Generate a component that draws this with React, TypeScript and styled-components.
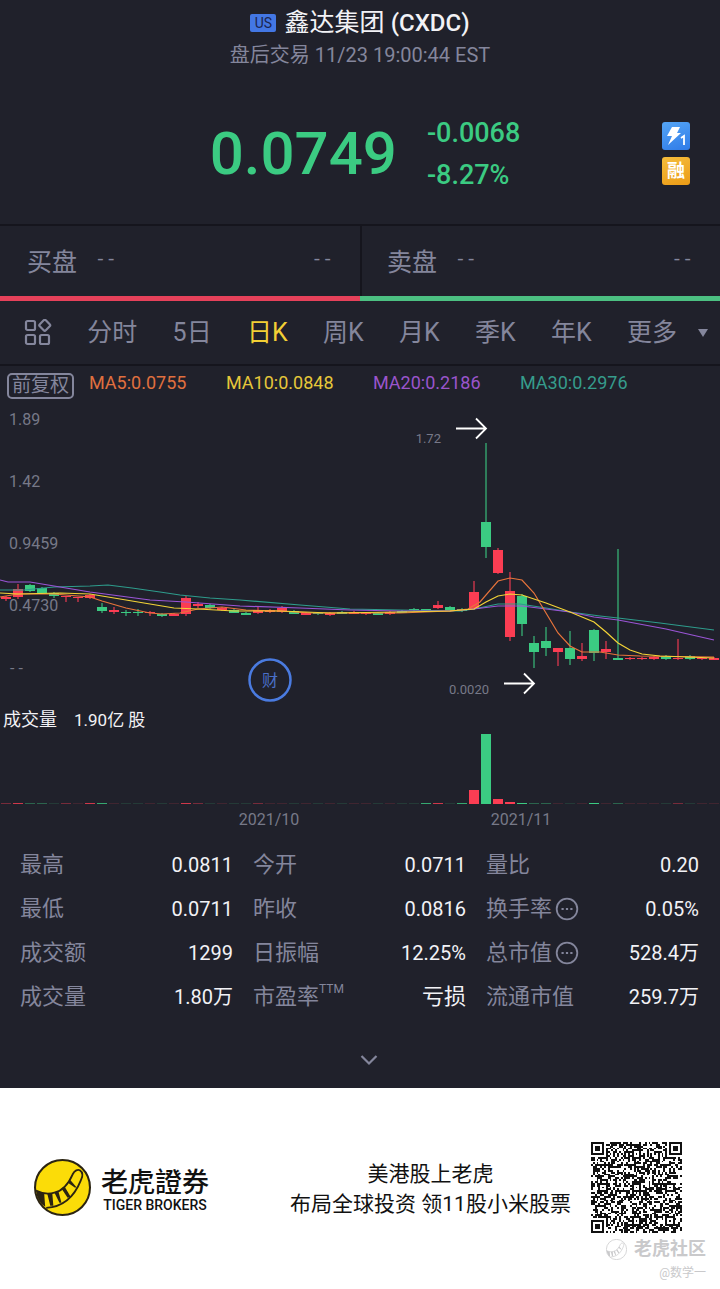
import React from 'react';
import styled, { createGlobalStyle } from 'styled-components';

const latin = `Roboto, "Noto Sans CJK SC", sans-serif`;
const color = {
  bg: '#20212b',
  line: '#15151d',
  muted: '#84869c',
  text: '#f2f2f6',
  red: '#fb3d53',
  green: '#3bcb82',
  yellow: '#f2cf35',
  blue: '#4377e4',
};

const Global = createGlobalStyle`
  * { box-sizing: border-box; }
  body { margin: 0; background: #fff; font-family: ${latin}; color: ${color.text}; }
  button { font: inherit; color: inherit; background: none; border: 0; padding: 0; cursor: pointer; }
`;

const Page = styled.main`
  display: flex;
  flex-direction: column;
`;
const Quote = styled.div`
  background: ${color.bg};
`;
const Header = styled.header`
  display: flex;
  flex-direction: column;
  align-items: center;
  padding-top: 5px;
`;
const Title = styled.h1`
  display: flex;
  align-items: center;
  gap: 8px;
  margin: 0;
  font-size: 25px;
  line-height: 36px;
  font-weight: 400;
`;
const Market = styled.span`
  background: ${color.blue};
  color: #1b2550;
  width: 26px;
  border-radius: 2px;
  font-size: 14px;
  line-height: 18px;
  text-align: center;
`;
const Ticker = styled.span`
  font-size: 24px;
  font-weight: 500;
`;
const Session = styled.p`
  margin: 0;
  color: ${color.muted};
  font-size: 20px;
  line-height: 28px;
`;
const PriceRow = styled.section`
  display: grid;
  grid-template-columns: 1fr auto 1fr;
  align-items: center;
  height: 155px;
  padding: 14px 30px 0 40px;
  color: ${color.green};
`;
const Figures = styled.div`
  grid-column: 2;
  display: flex;
  align-items: center;
  gap: 30px;
`;
const Price = styled.strong`
  font-size: 60px;
  line-height: 72px;
  font-weight: 500;
`;
const Changes = styled.div`
  display: flex;
  flex-direction: column;
  font-size: 27px;
  line-height: 42px;
  font-weight: 500;
`;
const Badges = styled.div`
  display: flex;
  flex-direction: column;
  align-items: flex-end;
  gap: 7px;
`;
const Badge = styled.span<{ $tone: string }>`
  display: grid;
  place-items: center;
  width: 28px;
  height: 28px;
  border-radius: 3px;
  background: ${(p) => p.$tone};
  color: #fff;
  font-size: 18px;
  line-height: 28px;
  font-weight: 700;
`;
const Book = styled.section`
  display: grid;
  grid-template-columns: 1fr 1fr;
  border-top: 2px solid ${color.line};
`;
const Side = styled.div<{ $bar: string }>`
  display: flex;
  align-items: center;
  gap: 18px;
  height: 75px;
  padding: 0 27px 3px;
  border-bottom: 5px solid ${(p) => p.$bar};
  color: ${color.muted};
  font-size: 25px;
  & + & { box-shadow: inset 2px 0 ${color.line}; }
`;
const Dashes = styled.span<{ $end?: boolean }>`
  font-family: "Liberation Mono", monospace;
  font-size: 18px;
  margin-left: ${(p) => (p.$end ? 'auto' : '0')};
`;
const Tabs = styled.nav`
  display: flex;
  align-items: center;
  justify-content: space-between;
  height: 65px;
  padding: 0 11px 0 24px;
  border-bottom: 2px solid ${color.line};
  color: ${color.muted};
`;
const Tab = styled.button<{ $active?: boolean }>`
  display: flex;
  align-items: center;
  gap: 20px;
  font-size: 25px;
  line-height: 36px;
  ${(p) => p.$active && `color: ${color.yellow};`}
`;
const Averages = styled.div`
  display: flex;
  align-items: center;
  height: 34px;
  padding-left: 7px;
  font-size: 18px;
  line-height: 24px;
`;
const Adjust = styled.button`
  width: 67px;
  height: 26px;
  border: 2px solid ${color.muted};
  border-radius: 5px;
  color: ${color.muted};
  font-size: 19px;
  line-height: 22px;
  margin: 6px 15px 0 0;
`;
const Average = styled.span<{ $tone: string; $wide?: boolean }>`
  width: ${(p) => (p.$wide ? 147 : 137)}px;
  color: ${(p) => p.$tone};
`;
const Chart = styled.svg`
  display: block;
  width: 100%;
  height: auto;
  font-family: ${latin};
`;
const VolumeTitle = styled.div`
  display: flex;
  gap: 17px;
  padding: 0 3px;
  font-size: 18px;
  line-height: 24px;
`;
const VolumeValue = styled.span`
  font-size: 17px;
`;
const Stats = styled.dl`
  display: grid;
  grid-template-columns: 1fr 1fr 1fr;
  column-gap: 20px;
  margin: 0;
  padding: 13px 21px 0 20px;
`;
const Stat = styled.div`
  display: flex;
  justify-content: space-between;
  height: 44px;
  font-size: 22px;
  line-height: 40px;
  white-space: nowrap;
`;
const Term = styled.dt`
  display: flex;
  align-items: center;
  gap: 3px;
  color: ${color.muted};
`;
const Sup = styled.sup`
  align-self: flex-start;
  font-size: 12px;
  line-height: 28px;
  margin-left: -3px;
`;
const Value = styled.dd<{ $words?: boolean }>`
  margin: 0;
  font-size: ${(p) => (p.$words ? 22 : 20)}px;
  line-height: 44px;
`;
const Expand = styled.button`
  display: grid;
  place-items: center;
  width: 100%;
  height: 69px;
  padding: 12px 0 0 17px;
  color: ${color.muted};
`;
const Footer = styled.footer`
  display: flex;
  align-items: flex-start;
  justify-content: space-between;
  padding: 54px 14px 8px 34px;
  color: #111;
`;
const Brand = styled.div`
  display: flex;
  align-items: center;
  gap: 10px;
  padding-top: 17px;
`;
const BrandText = styled.div`
  display: flex;
  flex-direction: column;
  align-items: center;
`;
const BrandName = styled.span`
  font-family: "Noto Sans CJK TC", sans-serif;
  font-size: 27px;
  line-height: 34px;
  font-weight: 500;
`;
const BrandLatin = styled.span`
  font-size: 14px;
  line-height: 14px;
  font-weight: 500;
`;
const Slogan = styled.p`
  margin: 0;
  padding: 17px 0 0 61px;
  font-size: 21px;
  line-height: 30px;
  text-align: center;
`;
const Share = styled.div`
  display: flex;
  flex-direction: column;
  align-items: flex-end;
  color: #c9c9cb;
`;
const Code = styled.svg`
  width: 91px;
  height: 91px;
  margin-right: 24px;
`;
const Community = styled.div`
  display: flex;
  align-items: center;
  gap: 7px;
  font-size: 18px;
  line-height: 32px;
  font-weight: 700;
`;
const Author = styled.span`
  font-size: 12px;
  line-height: 16px;
`;

type Candle = [up: 0 | 1, top: number, bottom: number, high: number, low: number];
// One entry per trading day: 1 is drawn green, 0 red.
const candles: Candle[] = [
  [0, 597, 599, 596, 601], [0, 589, 597, 584, 599], [1, 585, 591, 584, 592], [1, 588, 593, 587, 594],
  [1, 593, 596, 592, 598], [0, 596, 597, 596, 602], [0, 597, 598, 597, 602], [0, 595, 598, 594, 599],
  [1, 607, 611, 603, 613], [0, 610, 612, 607, 614], [1, 612, 613, 610, 616], [1, 612, 613, 609, 616],
  [0, 612, 613, 611, 616], [1, 614, 616, 613, 617], [0, 614, 616, 613, 616], [0, 598, 614, 596, 616],
  [0, 604, 606, 602, 608], [1, 605, 608, 604, 609], [0, 608, 610, 607, 611], [1, 610, 613, 609, 613],
  [1, 613, 615, 612, 615], [0, 610, 613, 607, 614], [0, 610, 612, 609, 613], [0, 608, 612, 606, 613],
  [1, 611, 614, 610, 614], [0, 613, 615, 612, 615], [1, 613, 614, 612, 615], [0, 613, 615, 612, 616],
  [1, 612, 614, 611, 614], [0, 612, 614, 611, 614], [0, 613, 614, 612, 615], [1, 613, 615, 612, 615],
  [0, 612, 614, 611, 615], [1, 611, 613, 610, 613], [1, 609, 610, 608, 611], [1, 609, 611, 609, 611],
  [0, 605, 608, 601, 609], [1, 607, 611, 606, 612], [1, 609, 611, 608, 612], [0, 592, 609, 581, 610],
  [1, 522, 547, 443, 558], [0, 550, 573, 548, 574], [0, 591, 637, 572, 641], [1, 596, 624, 594, 636],
  [1, 643, 652, 636, 668], [1, 641, 648, 627, 656], [0, 648, 652, 648, 666], [1, 648, 659, 631, 665],
  [0, 656, 659, 643, 661], [1, 630, 653, 629, 661], [0, 649, 652, 641, 659], [1, 658, 660, 549, 660],
  [0, 658, 659, 657, 660], [0, 658, 659, 657, 660], [0, 657, 659, 656, 660], [1, 656, 659, 655, 660],
  [0, 658, 659, 639, 660], [1, 656, 659, 655, 660], [0, 658, 659, 657, 660], [0, 658, 660, 657, 660],
];
const lines: [string, string][] = [
  ['#2e9c8c', '0,590 24,590 54,587 90,586 108,585 132,588 160,592 180,595 210,598 240,600 300,605 350,609 400,610 460,611 474,609 498,604 520,604 546,608 570,612 600,616 618,618 660,623 714,630'],
  ['#9a55d6', '0,580 8,582 30,582 48,585 66,588 90,592 120,596 150,600 186,602 240,606 300,608 350,610 400,611 450,611 474,609 498,606 522,606 546,609 570,612 594,617 618,620 666,629 714,640'],
  ['#e8743b', '0,597 18,594 54,594 90,597 102,601 126,608 150,613 162,614 180,613 198,609 222,607 246,610 280,611 310,613 400,613 450,611 468,609 480,602 498,581 510,578 522,580 534,593 546,613 558,633 570,646 582,652 600,652 618,655 640,656 714,657'],
  ['#f4d437', '0,593 18,594 60,593 90,594 126,600 150,604 174,608 198,609 234,611 280,611 330,613 400,612 450,611 474,609 486,602 498,596 510,594 522,595 546,603 570,612 594,622 606,632 618,643 630,650 642,654 660,656 714,658'],
];
const scale: [string, number][] = [['1.89', 425], ['1.42', 487], ['0.9459', 549], ['0.4730', 611]];
const volumes: Record<number, number> = { 39: 14, 40: 70, 41: 5, 42: 2, 43: 1, 49: 1 };
const bright = [1, 7, 8, 15, 35, 36, 38];
const faint = [0, 2, 3, 5, 16, 21, 44, 45, 51, 56];

const tone = (up: number) => (up ? color.green : color.red);
const volumeOpacity = (i: number) => {
  if (volumes[i]) return 1;
  if (bright.includes(i)) return 0.8;
  return faint.includes(i) ? 0.4 : 0.15;
};

function PriceChart() {
  return (
    <Chart viewBox="0 400 720 308" role="img" aria-label="日K">
      <g fill="#777988" fontSize="16">
        {scale.map(([t, y]) => <text key={t} x="9" y={y}>{t}</text>)}
        <text x="8" y="673" fontSize="14" fontFamily="Liberation Mono, monospace">--</text>
        <text x="441" y="443" fontSize="13" textAnchor="end">1.72</text>
        <text x="489" y="694" fontSize="13" textAnchor="end">0.0020</text>
      </g>
      {candles.map(([up, top, bottom, high, low], i) => (
        <g key={i} fill={tone(up)} shapeRendering="crispEdges">
          <rect x={12 * i + 5} y={high} width="2" height={low - high} opacity="0.55" />
          <rect x={12 * i + 1} y={top} width="10" height={bottom - top} />
        </g>
      ))}
      {lines.map(([stroke, points]) => (
        <polyline key={stroke} points={points} fill="none" stroke={stroke} strokeWidth="1.2" />
      ))}
      <g fill="none" stroke="#fff" strokeWidth="1.8">
        <path d="M456 428.5H486M476 418.5L486 428.5L476 438.5" />
        <path d="M504 683.5H534M524 673.5L534 683.5L524 693.5" />
      </g>
      <circle cx="270" cy="680" r="20.5" fill="none" stroke="#4a7be0" strokeWidth="2.5" />
      <text x="270" y="686" fontSize="16" textAnchor="middle" fill="#4a70c8">财</text>
    </Chart>
  );
}

function VolumeChart() {
  return (
    <Chart viewBox="0 732 720 98" role="img" aria-label="成交量">
      {candles.map(([up], i) => {
        const h = volumes[i] ?? 1;
        return <rect key={i} x={12 * i + 1} y={804 - h} width="10" height={h} fill={tone(up)} opacity={volumeOpacity(i)} />;
      })}
      <g fill="#777988" fontSize="16" textAnchor="middle">
        <text x="269" y="825">2021/10</text>
        <text x="521" y="825">2021/11</text>
      </g>
    </Chart>
  );
}

const GridIcon = () => (
  <svg width="28" height="28" viewBox="0 0 28 28" fill="none" stroke="currentColor" strokeWidth="2.2" aria-hidden="true">
    <rect x="2" y="2" width="9" height="9" rx="1.5" />
    <rect x="2" y="16" width="9" height="9" rx="1.5" />
    <rect x="16" y="16" width="9" height="9" rx="1.5" />
    <rect x="16.5" y="2" width="8.5" height="8.5" rx="1.5" transform="rotate(45 20.75 6.25)" />
  </svg>
);
const MoreIcon = () => (
  <svg width="24" height="24" viewBox="0 0 24 24" fill="none" stroke="currentColor" strokeWidth="1.8" aria-hidden="true">
    <circle cx="12" cy="12" r="10.3" />
    <path d="M6.5 12h2.2M10.900 12h2.2M15.300 12h2.2" strokeWidth="2.2" />
  </svg>
);
const BoltIcon = () => (
  <svg width="28" height="28" viewBox="0 0 28 28" aria-label="Level 1" role="img">
    <path d="M10 5h8l-3 6h4L6 23l4-9H5z" fill="#fff" />
    <path d="M19 16l3-2v9" fill="none" stroke="#fff" strokeWidth="1.8" />
  </svg>
);
const TailShapes = ({ ink, body }: { ink: string; body: string }) => (
  <>
    <circle cx="28" cy="28" r="27" fill={body} stroke={ink} strokeWidth="2" />
    <path d="M2 31C8 34 14 35 20 33C29 31 34 24 38 15C40 11 43 10 45 11C48 13 48 17 46 21C40 36 30 47 12 48" fill="none" stroke={ink} strokeWidth="1.8" />
    <path d="M2 31L10 34L11 47Q3 42 2 31ZM13 34L18 34L19 46L16 46ZM20 33L24 32L27 43L25 43ZM27 29L30 27L36 37L33 38ZM33 23L35 20L42 28L40 28Z" fill={ink} />
  </>
);

const SIZE = 49;
const alignAt = [6, 24, 42];
function darkModule(x: number, y: number) {
  const corners = [[0, 0], [SIZE - 7, 0], [0, SIZE - 7]];
  for (const [cx, cy] of corners) {
    const d = Math.max(Math.abs(x - cx - 3), Math.abs(y - cy - 3));
    if (d <= 4) return d !== 2 && d !== 4;
  }
  for (const ax of alignAt) {
    for (const ay of alignAt) {
      const d = Math.max(Math.abs(x - ax), Math.abs(y - ay));
      if (d <= 2) return d !== 1;
    }
  }
  if (x === 6 || y === 6) return (x + y) % 2 === 0;
  let h = (x * 374761393 + y * 668265263) | 0;
  h = Math.imul(h ^ (h >>> 13), 1274126177);
  return ((h ^ (h >>> 16)) & 15) < 8;
}
const qrPath = Array.from({ length: SIZE * SIZE }, (_, i) => [i % SIZE, Math.floor(i / SIZE)])
  .filter(([x, y]) => darkModule(x, y))
  .map(([x, y]) => `M${x} ${y}h1v1h-1z`)
  .join('');

const stats: { label: string; value: string; sup?: string; more?: boolean; words?: boolean }[] = [
  { label: '最高', value: '0.0811' },
  { label: '今开', value: '0.0711' },
  { label: '量比', value: '0.20' },
  { label: '最低', value: '0.0711' },
  { label: '昨收', value: '0.0816' },
  { label: '换手率', value: '0.05%', more: true },
  { label: '成交额', value: '1299' },
  { label: '日振幅', value: '12.25%' },
  { label: '总市值', value: '528.4万', more: true },
  { label: '成交量', value: '1.80万' },
  { label: '市盈率', value: '亏损', sup: 'TTM', words: true },
  { label: '流通市值', value: '259.7万' },
];

export default function App() {
  return (
    <Page>
      <Global />
      <Quote>
        <Header>
          <Title>
            <Market>US</Market>
            <span>鑫达集团 <Ticker>(CXDC)</Ticker></span>
          </Title>
          <Session>盘后交易 11/23 19:00:44 EST</Session>
        </Header>
        <PriceRow>
          <Figures>
            <Price>0.0749</Price>
            <Changes>
              <span>-0.0068</span>
              <span>-8.27%</span>
            </Changes>
          </Figures>
          <Badges>
            <Badge $tone="linear-gradient(160deg, #55a5f5, #2f7be8)"><BoltIcon /></Badge>
            <Badge $tone="linear-gradient(160deg, #f5bd3c, #eb9b16)">融</Badge>
          </Badges>
        </PriceRow>
        <Book>
          <Side $bar="#e5415a">
            <span>买盘</span><Dashes>--</Dashes><Dashes $end>--</Dashes>
          </Side>
          <Side $bar="#4cc082">
            <span>卖盘</span><Dashes>--</Dashes><Dashes $end>--</Dashes>
          </Side>
        </Book>
        <Tabs>
          <Tab aria-label="图表布局"><GridIcon /></Tab>
          <Tab>分时</Tab>
          <Tab>5日</Tab>
          <Tab $active>日K</Tab>
          <Tab>周K</Tab>
          <Tab>月K</Tab>
          <Tab>季K</Tab>
          <Tab>年K</Tab>
          <Tab>
            更多
            <svg width="12" height="10" viewBox="0 0 12 10" aria-hidden="true"><path d="M1 1h10L6 9z" fill="currentColor" /></svg>
          </Tab>
        </Tabs>
        <Averages>
          <Adjust>前复权</Adjust>
          <Average $tone="#e0703f">MA5:0.0755</Average>
          <Average $tone="#e6c73a" $wide>MA10:0.0848</Average>
          <Average $tone="#9a55cc" $wide>MA20:0.2186</Average>
          <Average $tone="#369c8c" $wide>MA30:0.2976</Average>
        </Averages>
        <PriceChart />
        <VolumeTitle><span>成交量</span><VolumeValue>1.90亿 股</VolumeValue></VolumeTitle>
        <VolumeChart />
        <Stats>
          {stats.map((s) => (
            <Stat key={s.label}>
              <Term>{s.label}{s.sup && <Sup>{s.sup}</Sup>}{s.more && <MoreIcon />}</Term>
              <Value $words={s.words}>{s.value}</Value>
            </Stat>
          ))}
        </Stats>
        <Expand aria-label="展开">
          <svg width="18" height="12" viewBox="0 0 18 12" fill="none" stroke="currentColor" strokeWidth="2.2" aria-hidden="true"><path d="M1.5 2L9 9.5L16.5 2" /></svg>
        </Expand>
      </Quote>
      <Footer>
        <Brand>
          <svg width="57" height="57" viewBox="0 0 56 56" aria-hidden="true"><TailShapes ink="#2b2412" body="#fbdc08" /></svg>
          <BrandText>
            <BrandName>老虎證券</BrandName>
            <BrandLatin>TIGER BROKERS</BrandLatin>
          </BrandText>
        </Brand>
        <Slogan>美港股上老虎<br />布局全球投资 领11股小米股票</Slogan>
        <Share>
          <Code viewBox={`0 0 ${SIZE} ${SIZE}`} role="img" aria-label="二维码" shapeRendering="crispEdges">
            <path d={qrPath} fill="#111" />
          </Code>
          <Community>
            <svg width="21" height="21" viewBox="0 0 56 56" aria-hidden="true"><TailShapes ink="#c9c9cb" body="#fff" /></svg>
            老虎社区
          </Community>
          <Author>@数学一</Author>
        </Share>
      </Footer>
    </Page>
  );
}
